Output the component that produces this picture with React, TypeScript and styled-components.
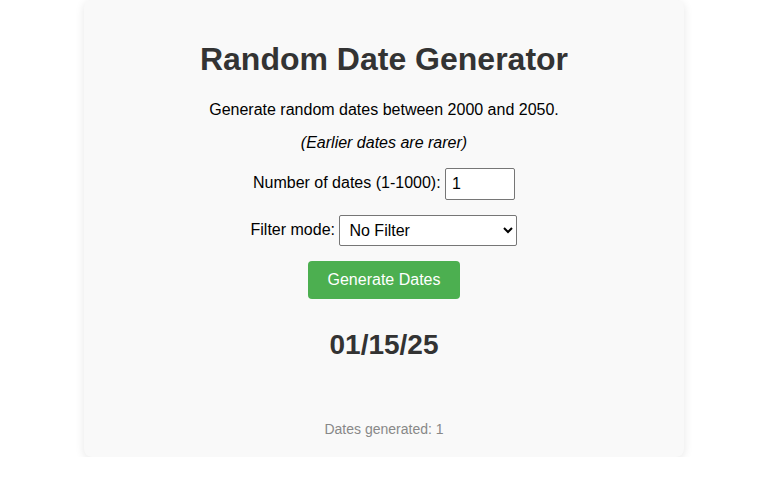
import { createGlobalStyle } from "styled-components"
import styled from "styled-components"

const Global = createGlobalStyle`
  body {
    margin      : 0;
    background  : #ffffff;
    font-family : "Liberation Sans", Arial, sans-serif;
  }
`

const Card = styled.div`
  width         : 560px;
  margin        : 0 auto;
  padding       : 20px;
  background    : #f9f9f9;
  border-radius : 8px;
  box-shadow    : 0 2px 10px rgba(0, 0, 0, 0.1);
  text-align    : center;
  color         : #333;
`

const Title = styled.h1`
  font-size   : 32px;
  font-weight : bold;
  margin      : 21px 0 23px;
  color       : #333;
`

const Text = styled.p<{ $italic?: boolean }>`
  font-size  : 16px;
  margin     : 15px 0;
  color      : #000;
  font-style : ${p => (p.$italic ? "italic" : "normal")};
`

const Form = styled.div`
  margin-top : 16px;
`

const Row = styled.div`
  margin-bottom : 15px;
  font-size     : 16px;
  color         : #000;
`

const NumberInput = styled.input`
  box-sizing    : border-box;
  width         : 70px;
  height        : 32px;
  padding       : 0 6px;
  font-size     : 16px;
  font-family   : inherit;
  border        : 1px solid #767676;
  border-radius : 2px;
  vertical-align: middle;
`

const Select = styled.select`
  width         : 178px;
  height        : 31px;
  padding       : 0 5px;
  font-size     : 16px;
  font-family   : inherit;
  border        : 1px solid #767676;
  border-radius : 2px;
  background    : #fff;
  color         : #000;
  vertical-align: middle;
`

const Button = styled.button`
  padding       : 10px 20px;
  font-size     : 16px;
  font-family   : inherit;
  color         : #fff;
  background    : #4caf50;
  border        : none;
  border-radius : 4px;
  cursor        : pointer;
`

const Result = styled.div`
  min-height  : 92px;
  margin-top  : 30px;
  font-size   : 28px;
  font-weight : bold;
  color       : #333;
`

const Counter = styled.div`
  font-size : 14px;
  color     : #888;
`

export default function App() {
  return (
    <>
      <Global />
      <Card>
        <Title>Random Date Generator</Title>
        <Text>Generate random dates between 2000 and 2050.</Text>
        <Text $italic>(Earlier dates are rarer)</Text>
        <Form>
          <Row>
            <label htmlFor="count">Number of dates (1-1000): </label>
            <NumberInput id="count" type="number" min={1} max={1000} defaultValue={1} />
          </Row>
          <Row>
            <label htmlFor="mode">Filter mode: </label>
            <Select id="mode" defaultValue="none">
              <option value="none">No Filter</option>
              <option value="weekdays">Weekdays Only</option>
              <option value="weekends">Weekends Only</option>
            </Select>
          </Row>
          <Button>Generate Dates</Button>
        </Form>
        <Result>01/15/25</Result>
        <Counter>Dates generated: 1</Counter>
      </Card>
    </>
  )
}
